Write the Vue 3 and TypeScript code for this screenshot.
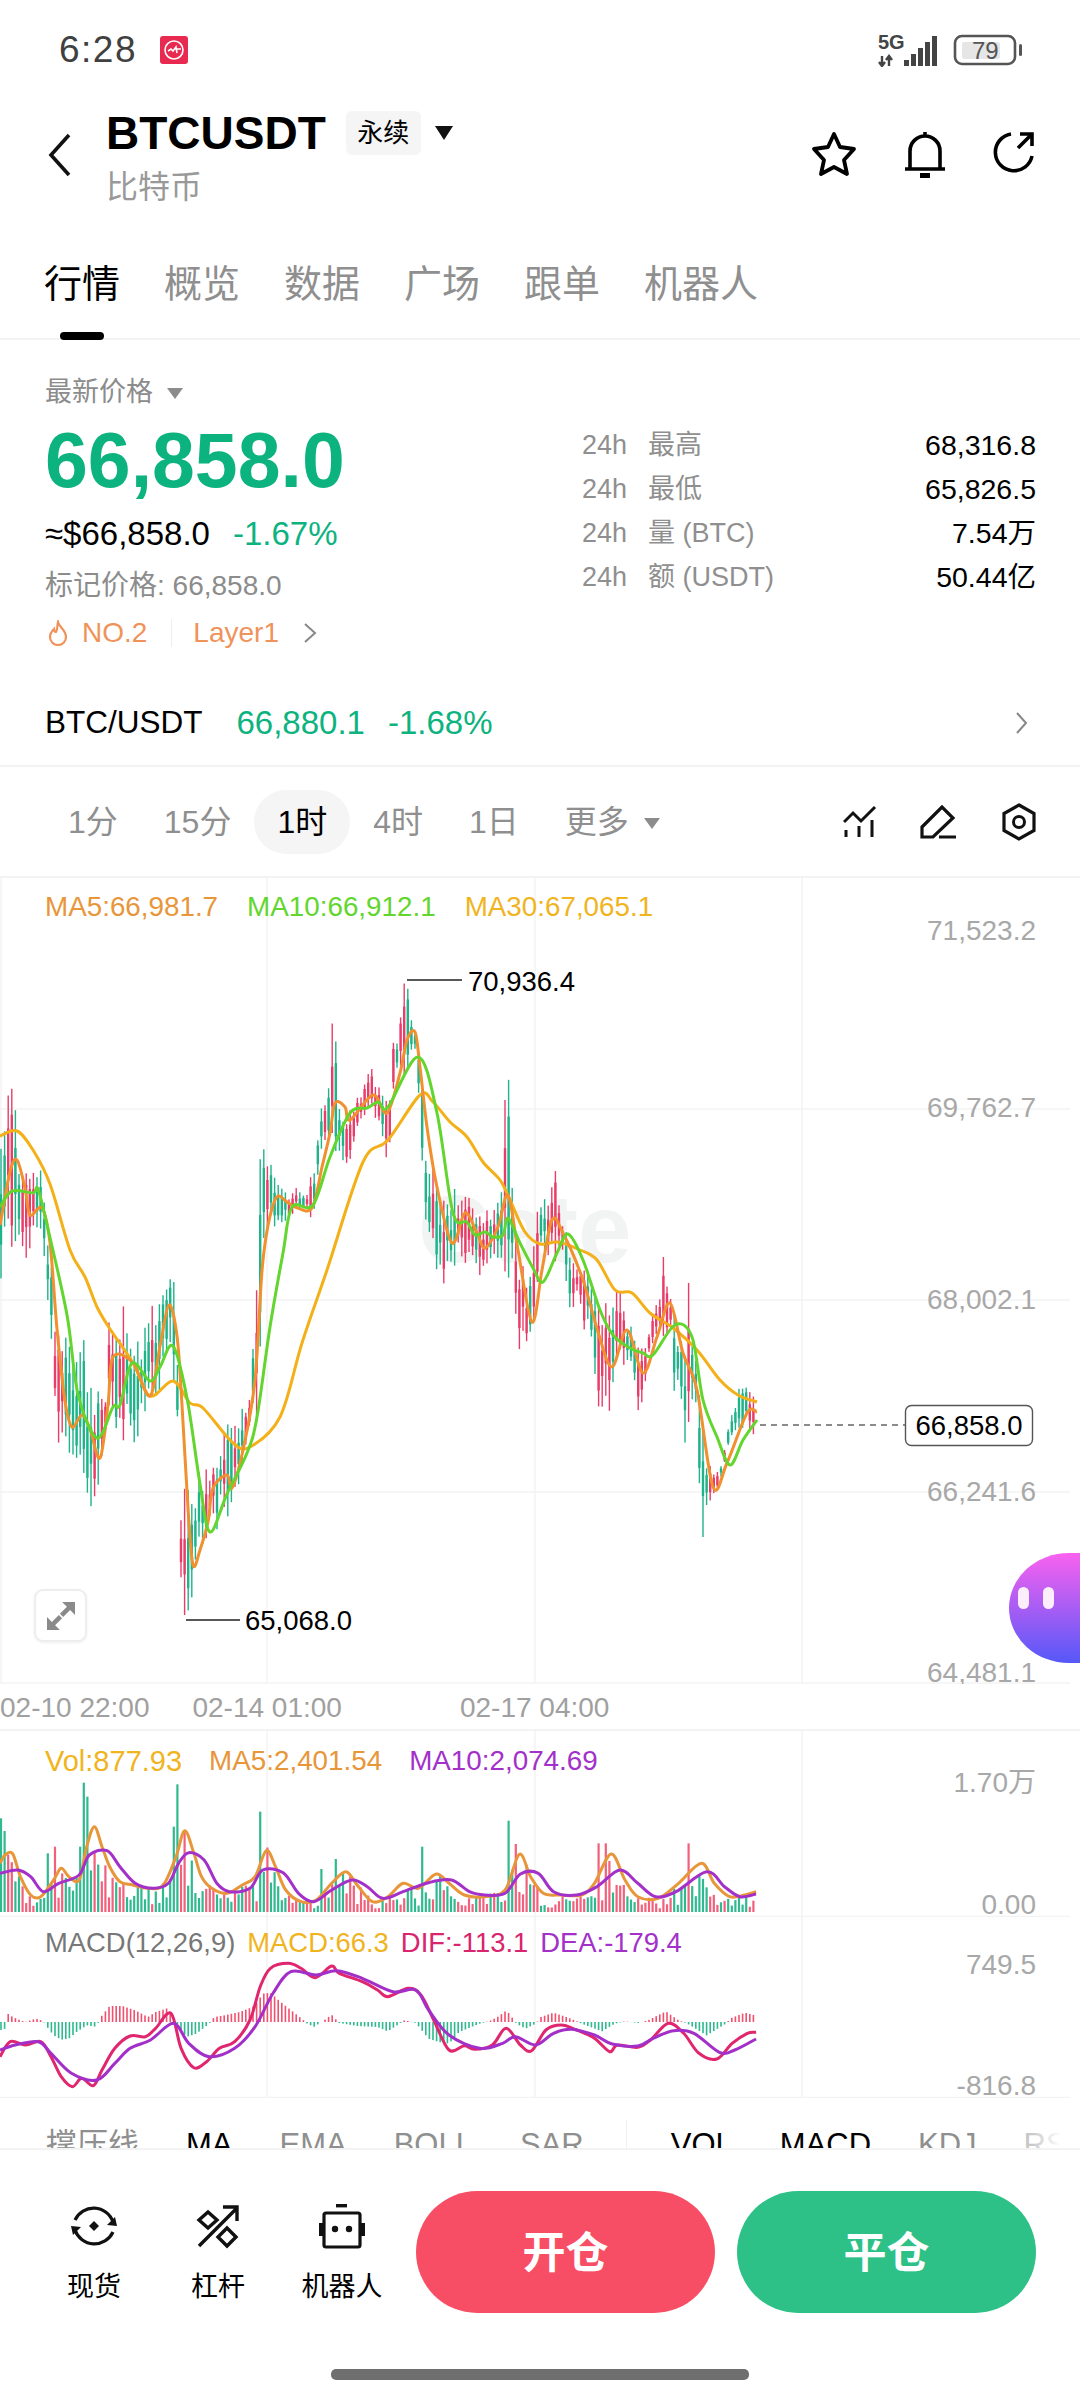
<script setup lang="ts">
type Pt = [number, number]

const tabs = ['行情', '概览', '数据', '广场', '跟单', '机器人']
const stats = [
  { label: '最高', value: '68,316.8' },
  { label: '最低', value: '65,826.5' },
  { label: '量 (BTC)', value: '7.54万' },
  { label: '额 (USDT)', value: '50.44亿' }
]
const intervals = ['1分', '15分', '1时', '4时', '1日']
const indicators = [
  { name: '撑压线', cls: 'dim' }, { name: 'MA', cls: 'on' }, { name: 'EMA', cls: 'dim' },
  { name: 'BOLL', cls: 'dim' }, { name: 'SAR', cls: 'dim' }, { name: '', cls: 'sep' },
  { name: 'VOL', cls: 'on' }, { name: 'MACD', cls: 'on' }, { name: 'KDJ', cls: 'dim' }, { name: 'RSI', cls: 'fade' }
]
const priceLabels = [
  { t: '71,523.2', y: 940 }, { t: '69,762.7', y: 1117 }, { t: '68,002.1', y: 1309 },
  { t: '66,241.6', y: 1501 }, { t: '64,481.1', y: 1682 }
]

// line traced from the chart, in page coordinates
const ma30: Pt[] = [[0,1136],[17,1131],[33,1150],[50,1184],[70,1250],[85,1277],[97,1307],[110,1329],[133,1363],[150,1396],[173,1381],[190,1403],[203,1408],[233,1443],[250,1447],[280,1417],[302,1343],[327,1270],[363,1162],[388,1140],[420,1095],[433,1102],[450,1122],[467,1137],[483,1162],[500,1180],[510,1200],[525,1232],[540,1244],[558,1242],[580,1250],[597,1260],[615,1290],[632,1293],[650,1313],[673,1328],[697,1350],[720,1380],[738,1395],[757,1402]]
const ma5: Pt[] = [[0,1225],[10,1172],[17,1160],[25,1188],[30,1215],[42,1208],[50,1243],[57,1329],[65,1401],[72,1427],[82,1415],[90,1429],[100,1458],[108,1405],[113,1357],[133,1363],[150,1396],[160,1346],[169,1305],[177,1336],[182,1405],[188,1508],[193,1565],[200,1550],[208,1522],[213,1488],[227,1475],[232,1488],[243,1450],[255,1380],[263,1260],[275,1200],[287,1202],[295,1207],[312,1208],[322,1167],[330,1133],[335,1103],[345,1107],[350,1120],[373,1095],[387,1113],[400,1073],[407,1040],[415,1032],[420,1067],[427,1127],[437,1187],[452,1243],[465,1213],[477,1233],[485,1248],[498,1227],[508,1195],[518,1250],[532,1322],[542,1270],[552,1220],[563,1233],[583,1280],[598,1332],[612,1367],[627,1330],[643,1373],[657,1337],[670,1303],[683,1353],[697,1390],[713,1487],[727,1463],[747,1413],[757,1412]]
const ma10: Pt[] = [[0,1207],[12,1191],[33,1193],[38,1189],[48,1229],[67,1315],[78,1394],[97,1438],[113,1407],[120,1405],[132,1363],[150,1381],[160,1367],[173,1346],[187,1398],[200,1484],[210,1532],[227,1494],[247,1453],[257,1417],[270,1327],[283,1253],[292,1207],[313,1205],[330,1157],[350,1113],[367,1108],[378,1102],[388,1107],[418,1057],[437,1113],[453,1213],[467,1222],[475,1235],[485,1232],[493,1237],[503,1235],[508,1218],[520,1243],[533,1268],[543,1282],[557,1253],[568,1234],[583,1260],[600,1310],[613,1335],[630,1348],[643,1353],[653,1355],[675,1325],[692,1337],[703,1400],[717,1437],[730,1465],[743,1440],[757,1420]]

const upper: Pt[] = [[0,1130],[10,1086],[14,1092],[20,1170],[35,1165],[40,1165],[50,1250],[60,1325],[80,1343],[84,1340],[85,1215],[87,1340],[90,1380],[100,1380],[108,1380],[110,1265],[113,1330],[120,1320],[125,1300],[135,1335],[155,1300],[165,1260],[172,1255],[175,1300],[179,1400],[180,1494],[195,1477],[210,1457],[218,1436],[240,1405],[250,1390],[255,1300],[258,1160],[263,1142],[271,1152],[275,1170],[290,1193],[292,1180],[305,1197],[315,1157],[321,1098],[328,1080],[331,1022],[335,1027],[340,1117],[350,1100],[360,1097],[368,1058],[375,1077],[385,1087],[390,1087],[392,1028],[398,1027],[403,985],[407,980],[410,1013],[417,1025],[423,1077],[425,1127],[428,1168],[433,1167],[440,1187],[455,1185],[465,1187],[480,1207],[495,1190],[503,1187],[505,1100],[510,1072],[513,1200],[515,1220],[530,1277],[537,1200],[548,1190],[557,1167],[562,1210],[570,1250],[590,1273],[598,1268],[607,1287],[614,1280],[617,1278],[625,1310],[640,1347],[647,1337],[655,1307],[660,1280],[664,1253],[668,1273],[671,1283],[680,1327],[686,1320],[688,1267],[690,1320],[692,1335],[700,1388],[705,1453],[715,1467],[722,1457],[730,1417],[735,1405],[741,1380],[746,1378],[750,1390],[754,1392],[757,1420]]
const lower: Pt[] = [[0,1315],[5,1274],[14,1238],[25,1263],[32,1250],[42,1238],[47,1303],[52,1374],[57,1460],[60,1451],[70,1482],[75,1465],[85,1474],[90,1550],[96,1536],[100,1506],[110,1394],[117,1436],[138,1450],[150,1425],[153,1408],[172,1363],[177,1413],[180,1572],[183,1595],[185,1620],[192,1607],[196,1583],[200,1562],[207,1537],[229,1520],[236,1500],[245,1450],[253,1420],[260,1418],[263,1245],[270,1233],[275,1230],[290,1220],[305,1210],[313,1225],[320,1170],[331,1127],[340,1172],[350,1162],[360,1127],[375,1117],[385,1157],[390,1167],[395,1090],[408,1067],[415,1060],[422,1158],[425,1218],[438,1282],[445,1293],[450,1288],[460,1268],[470,1275],[474,1287],[485,1277],[495,1268],[503,1268],[510,1280],[515,1275],[517,1380],[522,1357],[525,1347],[535,1323],[540,1257],[555,1262],[560,1252],[565,1273],[567,1315],[580,1305],[585,1335],[589,1338],[598,1443],[603,1457],[610,1425],[614,1398],[620,1360],[635,1382],[639,1425],[643,1397],[650,1357],[660,1337],[672,1333],[674,1405],[682,1408],[685,1445],[690,1413],[696,1410],[700,1502],[703,1537],[708,1507],[710,1517],[714,1497],[718,1492],[722,1483],[728,1450],[735,1443],[738,1445],[745,1422],[750,1433],[757,1440]]

// spikes whose colour is readable in the chart
const redAt = [10, 110, 125, 185, 331, 403, 505, 557, 664, 688]
const greenAt = [14, 85, 172, 335, 407, 510, 703]

// second group of traces was read off a 1.96x / 3x crop starting at y=1720
const zoomed = (pts: number[][]): Pt[] => pts.map(([x, y]) => [x / 1.96, 1720 + y / 3])

const volMa5 = zoomed([[0,430],[10,405],[25,402],[40,470],[60,525],[80,530],[105,480],[120,445],[135,470],[155,480],[170,380],[185,320],[200,380],[215,440],[235,485],[260,495],[290,505],[320,495],[345,410],[362,332],[380,400],[395,470],[415,505],[445,520],[475,495],[500,470],[522,392],[540,440],[560,510],[590,545],[620,540],[650,490],[678,455],[700,495],[730,545],[760,530],[790,490],[820,505],[855,462],[880,490],[910,525],[950,530],[990,510],[1018,403],[1040,470],[1065,520],[1100,525],[1140,525],[1165,490],[1198,402],[1225,480],[1250,530],[1290,535],[1330,490],[1375,430],[1400,490],[1430,530],[1460,525],[1482,515]])
const volMa10 = zoomed([[0,460],[35,450],[60,470],[85,515],[115,490],[155,465],[175,405],[210,392],[235,440],[265,490],[300,505],[330,490],[350,430],[370,398],[400,420],[425,490],[450,515],[490,505],[515,450],[555,458],[585,520],[615,545],[650,510],[690,480],[720,500],[750,535],[790,515],[840,488],[885,480],[920,515],[950,525],[990,520],[1020,462],[1055,460],[1085,515],[1130,525],[1170,500],[1215,450],[1250,490],[1285,530],[1325,515],[1385,455],[1420,500],[1450,530],[1482,522]])
const dif = zoomed([[0,1010],[20,965],[50,975],[80,965],[100,1010],[120,1070],[142,1100],[160,1075],[183,1097],[200,1050],[225,985],[255,948],[285,950],[305,925],[335,880],[355,985],[380,1043],[405,1025],[430,985],[460,965],[490,900],[510,800],[530,745],[565,730],[590,745],[618,773],[650,738],[665,760],[710,785],[740,810],[760,830],[800,805],[825,825],[850,900],[880,990],[910,977],[930,988],[965,975],[992,925],[1020,975],[1042,992],[1070,930],[1100,915],[1130,930],[1165,955],[1195,995],[1210,975],[1250,982],[1275,960],[1310,910],[1340,940],[1370,1000],[1405,1017],[1435,970],[1465,940],[1482,937]])
const dea = zoomed([[0,990],[30,975],[75,965],[100,1000],[140,1060],[190,1080],[225,1030],[255,985],[295,960],[340,910],[370,970],[410,1010],[460,985],[500,920],[535,820],[570,755],[620,765],[660,752],[710,775],[770,815],[815,810],[840,870],[880,945],[940,985],[985,970],[1010,950],[1050,975],[1085,940],[1120,928],[1165,945],[1200,972],[1250,978],[1280,955],[1320,932],[1360,940],[1410,997],[1440,990],[1482,957]])
const histo: Pt[] = ([[0,-25],[10,-20],[15,25],[25,15],[40,5],[50,0],[70,10],[85,3],[90,-10],[105,-40],[120,-53],[135,-50],[150,-30],[170,-10],[190,-15],[195,10],[215,48],[240,48],[265,35],[290,15],[305,30],[330,42],[342,5],[345,-3],[365,-45],[385,-35],[410,-5],[420,15],[440,20],[470,30],[490,42],[500,50],[515,85],[530,88],[550,60],[575,30],[595,5],[600,-3],[615,-15],[625,-5],[635,5],[650,22],[660,5],[665,-3],[700,-12],[740,-15],[760,-28],[785,-3],[790,5],[800,3],[815,-3],[840,-50],[860,-60],[880,-65],[900,-30],[940,-5],[960,3],[975,15],[993,35],[1008,5],[1012,-5],[1030,-20],[1050,-5],[1060,15],[1085,28],[1110,15],[1130,3],[1140,-5],[1180,-28],[1205,-5],[1225,2],[1250,-3],[1270,5],[1305,32],[1330,5],[1345,-3],[1385,-40],[1425,-3],[1430,10],[1460,28],[1485,18]] as Pt[]).map(([x, v]) => [x / 1.96, v / 3])
const volSpikes: Pt[] = zoomed([[0,295],[7,333],[97,400],[110,380],[160,380],[167,188],[174,230],[342,320],[350,193],[510,275],[628,447],[660,417],[830,380],[1000,302],[1012,372],[1175,370],[1187,370],[1350,370]])

function at(pts: Pt[], x: number): number {
  for (let i = 1; i < pts.length; i++) {
    if (x <= pts[i][0]) {
      const [x0, y0] = pts[i - 1]
      const [x1, y1] = pts[i]
      return y0 + ((y1 - y0) * (x - x0)) / (x1 - x0 || 1)
    }
  }
  return pts[pts.length - 1][1]
}

// catmull-rom through the traced points so the lines come out round
function smooth(pts: Pt[]): string {
  let d = `M${pts[0][0].toFixed(1)} ${pts[0][1].toFixed(1)}`
  for (let i = 0; i < pts.length - 1; i++) {
    const p0 = pts[Math.max(i - 1, 0)]
    const p1 = pts[i]
    const p2 = pts[i + 1]
    const p3 = pts[Math.min(i + 2, pts.length - 1)]
    const c1x = p1[0] + (p2[0] - p0[0]) / 6
    const c1y = p1[1] + (p2[1] - p0[1]) / 6
    const c2x = p2[0] - (p3[0] - p1[0]) / 6
    const c2y = p2[1] - (p3[1] - p1[1]) / 6
    d += `C${c1x.toFixed(1)} ${c1y.toFixed(1)} ${c2x.toFixed(1)} ${c2y.toFixed(1)} ${p2[0].toFixed(1)} ${p2[1].toFixed(1)}`
  }
  return d
}

let seed = 48271
function rnd(): number {
  seed = (seed * 16807) % 2147483647
  return seed / 2147483647
}

const STEP = 3.6
const candles: { x: number; hi: number; lo: number; top: number; h: number; up: boolean }[] = []
let last = true
for (let x = 1; x <= 757; x += STEP) {
  const near = (list: number[]) => list.some((v) => Math.abs(v - x) <= STEP / 2)
  const forced = near(redAt) || near(greenAt)
  const u = at(upper, x)
  const l = at(lower, x)
  const span = l - u
  // a single bar only covers part of the envelope
  const hi = forced ? u : u + rnd() * span * 0.34
  const lo = forced ? l : l - rnd() * span * 0.34
  const top = hi + (lo - hi) * (0.12 + rnd() * 0.28)
  const bottom = lo - (lo - hi) * (0.12 + rnd() * 0.28)
  const up = near(redAt) ? false : near(greenAt) ? true : rnd() < 0.62 ? last : !last
  last = up
  candles.push({ x, hi, lo, top, h: bottom - top, up })
}

const volBars = candles.map((c) => {
  const spike = volSpikes.find((s) => Math.abs(s[0] - c.x) <= STEP / 2)
  const top = spike ? spike[1] : 1912 - (1912 - at(volMa5, c.x)) * (0.25 + rnd() * 0.85)
  return { x: c.x, top, h: 1912 - top, up: c.up }
})

const macdBars = candles.map((c) => {
  const v = at(histo, c.x)
  return { x: c.x, y: v > 0 ? 2022 - v : 2022, h: Math.abs(v), red: v > 0 }
})
</script>

<template>
  <div class="page">
    <!-- status bar -->
    <div class="status">
      <span class="time">6:28</span>
      <svg class="app-badge" width="28" height="28" viewBox="0 0 28 28">
        <rect width="28" height="28" rx="3" fill="#e82a50" />
        <circle cx="14" cy="14" r="9" fill="none" stroke="#fff" stroke-width="1.6" />
        <path d="M8 15 L11 13 L13 15 L16 11 L17 17 M17 13 L21 13" fill="none" stroke="#fff" stroke-width="1.6" />
      </svg>
      <div class="status-right">
        <svg width="64" height="34" viewBox="0 0 64 34">
          <text x="1" y="16" class="net">5G</text>
          <path d="M5 23 V33 M2 29 L5 33 L8 29 M12 33 V23 M9 27 L12 23 L15 27" fill="none" stroke="#444" stroke-width="2.4" />
          <rect x="27" y="27" width="5" height="6" fill="#444" />
          <rect x="34" y="21" width="5" height="12" fill="#444" />
          <rect x="41" y="15" width="5" height="18" fill="#444" />
          <rect x="48" y="9" width="5" height="24" fill="#444" />
          <rect x="55" y="3" width="5" height="30" fill="#444" />
        </svg>
        <svg width="70" height="32" viewBox="0 0 70 32">
          <rect x="2" y="2" width="60" height="28" rx="7" fill="none" stroke="#555" stroke-width="2.6" />
          <rect x="9" y="8" width="38" height="17" rx="2" fill="#e6e6e6" />
          <text x="19" y="25" class="batt">79</text>
          <rect x="66" y="10" width="3" height="12" rx="1.5" fill="#555" />
        </svg>
      </div>
    </div>

    <!-- symbol header -->
    <div class="head">
      <svg class="back" width="24" height="44" viewBox="0 0 24 44">
        <path d="M21 2 L3 22 L21 42" fill="none" stroke="#111" stroke-width="3.6" />
      </svg>
      <div class="symbol">
        <div class="symbol-top">
          <span class="pair">BTCUSDT</span>
          <span class="tag">永续</span>
          <i class="tri black"></i>
        </div>
        <div class="coin">比特币</div>
      </div>
      <div class="head-icons">
        <svg width="48" height="46" viewBox="0 0 48 46">
          <path d="M24 3 L30 16 L44 18 L34 29 L37 43 L24 36 L11 43 L14 29 L4 18 L18 16 Z" fill="none" stroke="#000" stroke-width="3.8" stroke-linejoin="round" />
        </svg>
        <svg width="42" height="48" viewBox="0 0 42 48">
          <path d="M21 1 V6 M6 37 V20 A15 15 0 0 1 36 20 V37 M1 38 H41" fill="none" stroke="#000" stroke-width="3.6" />
          <rect x="16" y="42" width="10" height="5" fill="#000" />
        </svg>
        <svg width="44" height="44" viewBox="0 0 44 44">
          <path d="M19 3 A18.5 18.5 0 1 0 40 25" fill="none" stroke="#000" stroke-width="3.6" />
          <path d="M26 17 L40 3 M28 3 H40 V15" fill="none" stroke="#000" stroke-width="3.6" />
        </svg>
      </div>
    </div>

    <!-- tabs -->
    <div class="tabs">
      <span v-for="(t, i) in tabs" :key="t" class="tab" :class="{ active: i === 0 }">{{ t }}</span>
      <i class="tab-line"></i>
    </div>

    <!-- price block -->
    <div class="price-wrap">
      <div class="price-left">
        <div class="latest">最新价格 <i class="tri gray"></i></div>
        <div class="big">66,858.0</div>
        <div class="approx">≈$66,858.0<span class="pct">-1.67%</span></div>
        <div class="mark">标记价格: 66,858.0</div>
        <div class="rank">
          <svg width="22" height="26" viewBox="0 0 22 26">
            <path d="M11 2 C12 7 19 10 19 17 A8 8 0 0 1 3 17 C3 13 5 11 7 9 C7 11 8 12 9 12 C11 9 10 5 11 2 Z" fill="none" stroke="#f0935a" stroke-width="2.2" />
          </svg>
          <span>NO.2</span>
          <i class="rank-sep"></i>
          <span>Layer1</span>
          <svg class="rank-arrow" width="14" height="22" viewBox="0 0 14 22">
            <path d="M2 2 L12 11 L2 20" fill="none" stroke="#888" stroke-width="2" />
          </svg>
        </div>
      </div>
      <div class="price-right">
        <div v-for="s in stats" :key="s.label" class="stat">
          <span class="stat-h">24h</span>
          <span class="stat-l">{{ s.label }}</span>
          <span class="stat-v">{{ s.value }}</span>
        </div>
      </div>
    </div>

    <!-- spot row -->
    <div class="spot">
      <span class="spot-name">BTC/USDT</span>
      <span class="spot-num">66,880.1</span>
      <span class="spot-num">-1.68%</span>
      <svg class="spot-arrow" width="13" height="24" viewBox="0 0 13 24">
        <path d="M2 2 L11 12 L2 22" fill="none" stroke="#888" stroke-width="2" />
      </svg>
    </div>

    <!-- intervals -->
    <div class="intervals">
      <span v-for="(v, i) in intervals" :key="v" class="iv" :class="{ cur: i === 2 }">{{ v }}</span>
      <span class="iv more">更多 <i class="tri gray big-tri"></i></span>
      <div class="iv-icons">
        <svg class="iv-first" width="34" height="34" viewBox="0 0 34 34">
          <path d="M1 17 L10 8 L18 16 L32 2" fill="none" stroke="#111" stroke-width="3" />
          <path d="M3 25 V32 M16 21 V32 M29 15 V32" fill="none" stroke="#111" stroke-width="3" />
        </svg>
        <svg width="36" height="34" viewBox="0 0 36 34">
          <path d="M2 32 V22 L22 2 L33 13 L13 32 Z M19 32 H36" fill="none" stroke="#111" stroke-width="3.2" />
        </svg>
        <svg width="34" height="38" viewBox="0 0 34 38">
          <path d="M17 2 L32 10.5 V27.5 L17 36 L2 27.5 V10.5 Z" fill="none" stroke="#111" stroke-width="3.2" />
          <circle cx="17" cy="19" r="5.5" fill="none" stroke="#111" stroke-width="3" />
        </svg>
      </div>
    </div>

    <!-- main chart -->
    <div class="panel main">
      <svg class="plot" width="1080" height="806" viewBox="0 878 1080 806">
        <path d="M0 1109 H1070 M0 1300 H1070 M0 1492 H1070 M0 1683 H1070 M267 878 V1683 M535 878 V1683 M802 878 V1683 M1 878 V1683" class="grid" />
        <text x="418" y="1262" class="mark-logo">Gate</text>
        <g v-for="c in candles" :key="c.x">
          <rect :x="c.x - 0.7" :y="c.hi" width="1.4" :height="c.lo - c.hi" :fill="c.up ? '#1fb38a' : '#e93c68'" />
          <rect :x="c.x - 1.2" :y="c.top" width="2.4" :height="c.h" :fill="c.up ? '#1fb38a' : '#e93c68'" />
        </g>
        <path :d="smooth(ma30)" class="line" stroke="#f3b018" />
        <path :d="smooth(ma5)" class="line" stroke="#f0902e" />
        <path :d="smooth(ma10)" class="line" stroke="#62d62e" />
        <path d="M407 980 H462 M186 1620 H240" fill="none" stroke="#222" stroke-width="1.4" />
        <text x="468" y="991" class="val">70,936.4</text>
        <text x="245" y="1630" class="val">65,068.0</text>
        <path d="M760 1425 H905" fill="none" stroke="#666" stroke-width="1.4" stroke-dasharray="6 5" />
        <rect x="905.5" y="1405.5" width="127" height="40" rx="6" fill="#fff" stroke="#555" stroke-width="1.4" />
        <text x="969" y="1435" class="val" text-anchor="middle">66,858.0</text>
        <text v-for="p in priceLabels" :key="p.t" x="1036" :y="p.y" class="axis" text-anchor="end">{{ p.t }}</text>
      </svg>
      <div class="legend">
        <span class="c-ma5">MA5:66,981.7</span>
        <span class="c-ma10">MA10:66,912.1</span>
        <span class="c-ma30">MA30:67,065.1</span>
      </div>
      <div class="expand">
        <svg width="28" height="28" viewBox="0 0 26 26">
          <path d="M14 0 H26 V12 L21.5 7.5 L15 14 L12 11 L18.5 4.5 Z M12 26 H0 V14 L4.5 18.5 L11 12 L14 15 L7.5 21.5 Z" fill="#8a8a8a" />
        </svg>
      </div>
      <div class="bot">
        <i></i><i></i>
      </div>
    </div>

    <div class="dates">
      <span>02-10 22:00</span>
      <span>02-14 01:00</span>
      <span>02-17 04:00</span>
    </div>

    <!-- volume -->
    <div class="panel vol">
      <svg class="plot" width="1080" height="186" viewBox="0 1731 1080 186">
        <path d="M267 1731 V1917 M535 1731 V1917 M802 1731 V1917 M0 1916.5 H1070" class="grid" />
        <rect v-for="b in volBars" :key="b.x" :x="b.x - 1.1" :y="b.top" width="2.2" :height="b.h" :fill="b.up ? '#2fb98f' : '#f2607c'" />
        <path :d="smooth(volMa5)" class="line" stroke="#e8963a" />
        <path :d="smooth(volMa10)" class="line" stroke="#a331c9" />
        <text x="1036" y="1792" class="axis" text-anchor="end">1.70万</text>
        <text x="1036" y="1914" class="axis" text-anchor="end">0.00</text>
      </svg>
      <div class="legend">
        <span class="c-vol">Vol:877.93</span>
        <span class="c-ma5">MA5:2,401.54</span>
        <span class="c-purple">MA10:2,074.69</span>
      </div>
    </div>

    <!-- macd -->
    <div class="panel macd">
      <svg class="plot" width="1080" height="181" viewBox="0 1917 1080 181">
        <path d="M267 1917 V2098 M535 1917 V2098 M802 1917 V2098 M0 2097.5 H1070" class="grid" />
        <rect v-for="b in macdBars" :key="b.x" :x="b.x - 0.8" :y="b.y" width="1.6" :height="b.h" :fill="b.red ? '#f2506f' : '#2fb98f'" />
        <path :d="smooth(dif)" class="line" stroke="#e0266e" />
        <path :d="smooth(dea)" class="line" stroke="#a32fc9" />
        <text x="1036" y="1974" class="axis" text-anchor="end">749.5</text>
        <text x="1036" y="2095" class="axis" text-anchor="end">-816.8</text>
      </svg>
      <div class="legend tight">
        <span class="c-gray">MACD(12,26,9)</span>
        <span class="c-vol">MACD:66.3</span>
        <span class="c-pink">DIF:-113.1</span>
        <span class="c-purple">DEA:-179.4</span>
      </div>
    </div>

    <!-- indicators, cut off by the action bar -->
    <div class="inds">
      <span v-for="(d, i) in indicators" :key="i" :class="d.cls">{{ d.name }}</span>
    </div>

    <!-- actions -->
    <div class="actions">
      <div class="row">
        <div class="nav">
          <svg width="46" height="46" viewBox="0 0 46 46">
            <path d="M4 17 A20.5 20.5 0 0 1 42 19 M42 29 A20.5 20.5 0 0 1 4 27" fill="none" stroke="#111" stroke-width="3.2" />
            <path d="M46 23 L36 22 L44 14 Z M0 23 L10 24 L2 32 Z" fill="#111" />
            <path d="M23 18 L28 23 L23 28 L18 23 Z" fill="#111" />
          </svg>
          <span>现货</span>
        </div>
        <div class="nav">
          <svg width="46" height="46" viewBox="0 0 46 46">
            <path d="M4 43 L42 5 M28 4 H42 V18" fill="none" stroke="#111" stroke-width="3.4" />
            <path d="M13 9 L22 17 L13 25 L4 17 Z M32 25 L41 34 L32 43 L23 34 Z" fill="none" stroke="#111" stroke-width="3.4" />
          </svg>
          <span>杠杆</span>
        </div>
        <div class="nav">
          <svg width="46" height="46" viewBox="0 0 46 46">
            <rect x="5" y="10" width="36" height="34" rx="2" fill="none" stroke="#111" stroke-width="3.2" />
            <rect x="17" y="1" width="11" height="3.4" fill="#111" />
            <rect x="0" y="20" width="4" height="13" fill="#111" />
            <rect x="42" y="20" width="4" height="13" fill="#111" />
            <circle cx="16" cy="26" r="3.2" fill="#111" />
            <circle cx="30" cy="26" r="3.2" fill="#111" />
          </svg>
          <span>机器人</span>
        </div>
        <button class="btn open">开仓</button>
        <button class="btn close">平仓</button>
      </div>
      <div class="home"></div>
    </div>
  </div>
</template>

<style scoped>
.page {
  position: relative;
  width: 1080px;
  height: 2400px;
  overflow: hidden;
  background: #fff;
  color: #000;
  font-family: "Liberation Sans", "Noto Sans CJK SC", sans-serif;
}

.tri {
  display: inline-block;
  width: 0;
  height: 0;
  border-left: 8px solid transparent;
  border-right: 8px solid transparent;
}
.tri.gray {
  border-top: 11px solid #8c8c8c;
}
.tri.black {
  border-left-width: 9px;
  border-right-width: 9px;
  border-top: 14px solid #111;
  margin-left: 14px;
}

/* status */
.status {
  height: 100px;
  display: flex;
  align-items: center;
  padding: 0 58px 0 59px;
  box-sizing: border-box;
}
.time {
  font-size: 37px;
  letter-spacing: 1.5px;
  color: #404040;
  width: 101px;
}
.app-badge {
  display: block;
}
.status-right {
  margin-left: auto;
  margin-right: -1px;
  display: flex;
  align-items: center;
  gap: 12px;
}
.status-right svg {
  display: block;
}
.net {
  font-size: 20px;
  font-weight: 700;
  fill: #444;
}
.batt {
  font-size: 24px;
  fill: #555;
}

/* header */
.head {
  height: 122px;
  display: flex;
  padding: 0 44px 0 48px;
}
.back {
  margin-top: 33px;
}
.symbol {
  margin-left: 34px;
}
.symbol-top {
  display: flex;
  align-items: center;
  height: 56px;
  margin-top: 5px;
}
.pair {
  font-size: 46px;
  font-weight: 700;
}
.tag {
  margin-left: 20px;
  width: 75px;
  height: 44px;
  line-height: 44px;
  text-align: center;
  font-size: 26px;
  background: #f5f5f5;
  border-radius: 6px;
}
.coin {
  font-size: 32px;
  color: #999;
  line-height: 40px;
  margin-top: 6px;
}
.head-icons {
  margin-left: auto;
  display: flex;
  align-items: flex-start;
  gap: 46px;
  padding-top: 31px;
}

/* tabs */
.tabs {
  position: relative;
  height: 118px;
  display: flex;
  gap: 44px;
  padding: 39px 0 0 44px;
  box-sizing: border-box;
  border-bottom: 2px solid #f3f3f3;
}
.tab {
  font-size: 38px;
  line-height: 46px;
  color: #8f8f8f;
}
.tab.active {
  color: #000;
}
.tab-line {
  position: absolute;
  left: 60px;
  bottom: -2px;
  width: 44px;
  height: 8px;
  border-radius: 4px;
  background: #000;
}

/* price */
.price-wrap {
  height: 340px;
  display: flex;
  justify-content: space-between;
  padding: 30px 44px 0 45px;
  box-sizing: border-box;
}
.latest {
  font-size: 27px;
  line-height: 44px;
  color: #8c8c8c;
}
.latest .tri {
  margin-left: 6px;
  vertical-align: 2px;
}
.big {
  font-size: 77px;
  font-weight: 700;
  line-height: 92px;
  color: #0db37f;
}
.approx {
  font-size: 33px;
  line-height: 56px;
}
.pct {
  color: #0db37f;
  margin-left: 23px;
}
.mark {
  font-size: 28px;
  line-height: 48px;
  color: #8c8c8c;
}
.rank {
  display: flex;
  align-items: center;
  height: 46px;
  font-size: 28px;
  color: #f0935a;
  padding-left: 2px;
}
.rank span:first-of-type {
  margin-left: 13px;
}
.rank-sep {
  width: 1px;
  height: 28px;
  background: #eee;
  margin: 0 21px 0 24px;
}
.rank-arrow {
  margin-left: 24px;
}
.price-right {
  width: 454px;
  margin-top: 53px;
}
.stat {
  display: flex;
  font-size: 27px;
  line-height: 44px;
  color: #8f8f8f;
}
.stat-l {
  margin-left: 21px;
}
.stat-v {
  margin-left: auto;
  color: #000;
  font-size: 28.5px;
}

/* spot */
.spot {
  height: 87px;
  display: flex;
  align-items: center;
  padding: 0 52px 0 45px;
  box-sizing: border-box;
  font-size: 31.5px;
  border-bottom: 2px solid #f3f3f3;
}
.spot-num {
  color: #0db37f;
  font-size: 33px;
  margin-left: 23px;
}
.spot-name + .spot-num {
  margin-left: 34px;
}
.spot-arrow {
  margin-left: auto;
}

/* intervals */
.intervals {
  height: 111px;
  display: flex;
  align-items: center;
  padding: 0 44px 0 45px;
  box-sizing: border-box;
  border-bottom: 2px solid #f3f3f3;
}
.iv {
  font-size: 32px;
  line-height: 64px;
  padding: 0 23px;
  color: #8f8f8f;
  border-radius: 32px;
}
.iv.cur {
  color: #000;
  background: #f5f5f5;
}
.big-tri {
  margin-left: 6px;
  vertical-align: 4px;
}
.iv-icons {
  margin-left: auto;
  display: flex;
  align-items: center;
  gap: 46px;
}
.iv-icons svg {
  display: block;
}
.iv-first {
  margin-right: -3px;
}

/* charts */
.panel {
  position: relative;
}
.main {
  height: 806px;
}
.vol {
  height: 186px;
}
.macd {
  height: 181px;
}
.plot {
  position: absolute;
  left: 0;
  top: 0;
  display: block;
}
.grid {
  fill: none;
  stroke: #f3f3f3;
  stroke-width: 1.4;
}
.line {
  fill: none;
  stroke-width: 3;
  stroke-linejoin: round;
}
.val {
  font-size: 27.5px;
  fill: #000;
}
.axis {
  font-size: 28px;
  fill: #a8a8a8;
}
.mark-logo {
  font-size: 96px;
  font-weight: 700;
  fill: #f2f3f3;
}
.legend {
  position: relative;
  display: flex;
  gap: 29px;
  padding-left: 45px;
  font-size: 27.8px;
  line-height: 58px;
}
.vol .legend {
  line-height: 60px;
  gap: 27px;
}
.vol .c-vol {
  font-size: 29px;
}
.macd .legend {
  line-height: 52px;
  font-size: 27.4px;
}
.legend.tight {
  gap: 12px;
}
.c-ma5 {
  color: #e8963a;
}
.c-ma10 {
  color: #62d62e;
}
.c-ma30,
.c-vol {
  color: #f0b41e;
}
.c-purple {
  color: #a331c9;
}
.c-gray {
  color: #777;
}
.c-pink {
  color: #d9246e;
}
.expand {
  position: absolute;
  left: 34px;
  top: 711px;
  width: 53px;
  height: 53px;
  box-sizing: border-box;
  border: 2px solid #eee;
  border-radius: 9px;
  background: #fff;
  box-shadow: 0 1px 3px rgba(0, 0, 0, 0.06);
  display: flex;
  align-items: center;
  justify-content: center;
}
.bot {
  position: absolute;
  right: 0;
  top: 675px;
  width: 71px;
  height: 110px;
  border-radius: 60px 0 0 60px / 55px 0 0 55px;
  background: linear-gradient(180deg, #f962ef, #5558f8);
}
.bot i {
  position: absolute;
  top: 34px;
  width: 11px;
  height: 22px;
  border-radius: 6px;
  background: #fdeefc;
}
.bot i:first-child {
  left: 9px;
}
.bot i:last-child {
  left: 34px;
}

.dates {
  height: 47px;
  display: flex;
  align-items: center;
  padding-top: 3px;
  font-size: 28px;
  color: #a0a0a0;
  border-bottom: 2px solid #f3f3f3;
  box-sizing: border-box;
}
.dates span:nth-child(2) {
  margin-left: 43px;
}
.dates span:nth-child(3) {
  margin-left: 118px;
}

/* indicator row */
.inds {
  position: relative;
  height: 50px;
  overflow: hidden;
  display: flex;
  align-items: flex-start;
  gap: 47px;
  padding: 22px 0 0 46px;
  box-sizing: border-box;
  font-size: 31px;
  line-height: 50px;
  white-space: nowrap;
}
.inds::after {
  content: "";
  position: absolute;
  right: 0;
  top: 0;
  bottom: 0;
  width: 48px;
  background: linear-gradient(90deg, rgba(255, 255, 255, 0), #fff 60%);
}
.inds .dim {
  color: #8f8f8f;
}
.inds .on {
  color: #000;
}
.inds .fade {
  color: #c8c8c8;
}
.inds .sep {
  width: 1px;
  height: 50px;
  background: #f0f0f0;
  margin: 0 -3px 0 -5px;
}

/* bottom */
.actions {
  border-top: 2px solid #f3f3f3;
  height: 252px;
  box-sizing: border-box;
  padding-top: 41px;
}
.row {
  display: flex;
  align-items: flex-start;
  padding: 0 44px 0 32px;
}
.nav {
  width: 124px;
  display: flex;
  flex-direction: column;
  align-items: center;
  padding-top: 12px;
  font-size: 27px;
}
.nav svg {
  display: block;
}
.nav span {
  margin-top: 20px;
  line-height: 36px;
}
.btn {
  width: 299px;
  height: 122px;
  border: none;
  border-radius: 61px;
  color: #fff;
  font-family: inherit;
  font-size: 43px;
  font-weight: 700;
  padding: 0 0 7px;
}
.btn.open {
  margin-left: 12px;
  background: #f84e65;
}
.btn.close {
  margin-left: 22px;
  background: #2dc187;
}
.home {
  width: 418px;
  height: 11px;
  border-radius: 5px;
  margin: 56px auto 0;
  background: #6f6f6f;
}
</style>
